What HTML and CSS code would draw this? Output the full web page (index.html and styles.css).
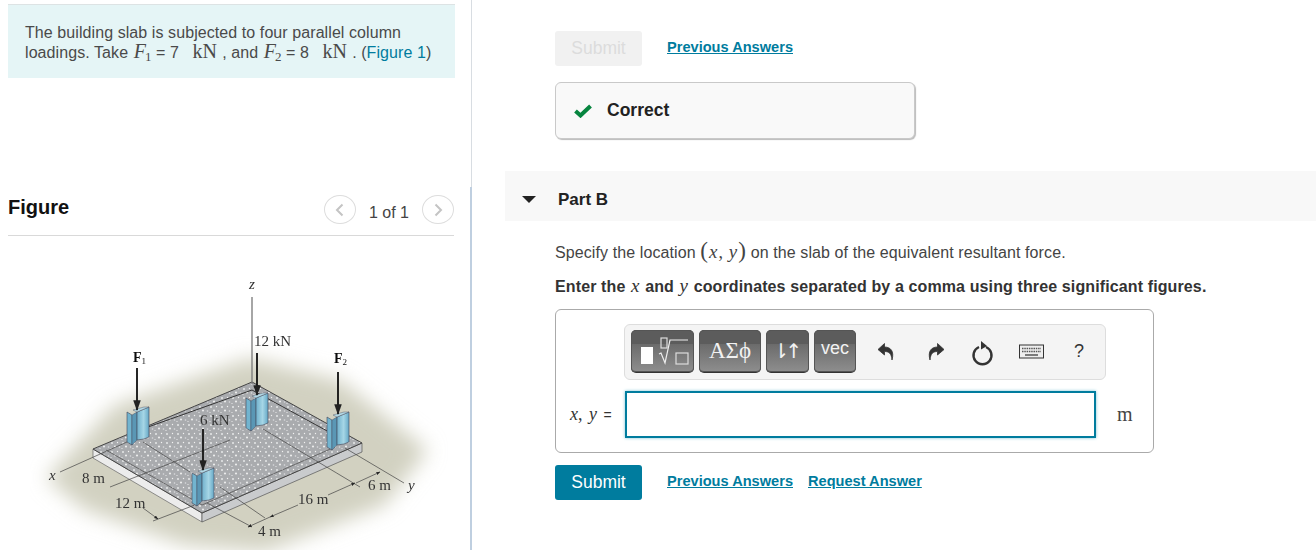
FILE: index.html
```html
<!DOCTYPE html>
<html lang="en">
<head>
<meta charset="utf-8">
<title>Part B</title>
<link rel="stylesheet" href="styles.css">
</head>
<body>
<div class="page">
  <aside class="left">
    <div class="intro">
      <p>The building slab is subjected to four parallel column<br>loadings. Take <span class="m"><i>F</i><sub>1</sub></span> = 7 <span class="m unit">kN</span>, and <span class="m"><i>F</i><sub>2</sub></span> = 8 <span class="m unit">kN</span>. (<a class="fig-link" href="#">Figure 1</a>)</p>
    </div>
    <div class="fig-head">
      <h2>Figure</h2>
      <div class="pager">
        <span class="circle"><svg width="12" height="14" viewBox="0 0 12 14"><path d="M8.500 1.500 3 7l5.500 5.500" fill="none" stroke="#c4c4c4" stroke-width="2"/></svg></span>
        <span class="count">1 of 1</span>
        <span class="circle"><svg width="12" height="14" viewBox="0 0 12 14"><path d="M3.500 1.500 9 7l-5.500 5.500" fill="none" stroke="#c4c4c4" stroke-width="2"/></svg></span>
      </div>
    </div>
    <svg class="figure" width="420" height="280" viewBox="30 270 420 280">
      <defs>
        <filter id="blur" x="-20%" y="-20%" width="140%" height="140%"><feGaussianBlur stdDeviation="10"/></filter>
        <filter id="soft"><feGaussianBlur stdDeviation="0.4"/></filter>
        <pattern id="dots" width="11" height="9" patternUnits="userSpaceOnUse">
          <rect width="11" height="9" fill="#a9abae"/>
          <circle cx="2" cy="2" r="1" fill="#e6e7e8"/>
          <circle cx="7.500" cy="1.500" r="0.700" fill="#f2f2f2"/>
          <circle cx="5" cy="5.500" r="1.100" fill="#ececec"/>
          <circle cx="9.500" cy="6" r="0.800" fill="#dcdde0"/>
          <circle cx="1" cy="7.500" r="0.600" fill="#f2f2f2"/>
        </pattern>
        <linearGradient id="steel" x1="0" x2="1" y1="0" y2="0">
          <stop offset="0" stop-color="#6fb0cc"/><stop offset=".55" stop-color="#a6d6e6"/><stop offset="1" stop-color="#65a8c6"/>
        </linearGradient>
        <g id="col">
          <path d="M0 5 5 8 5 38 0 35Z" fill="#72b4cf" stroke="#445" stroke-width=".6"/>
          <path d="M5 8 10 5 10 33 5 38Z" fill="#5a97b5" stroke="#445" stroke-width=".4"/>
          <path d="M10 5 22 0 22 30 17 32 10 33Z" fill="url(#steel)" stroke="#445" stroke-width=".6"/>
          <path d="M10 5 6 3 17 0 22 0Z" fill="#b5dbe8" stroke="#445" stroke-width=".4"/>
        </g>
        <marker id="ah" viewBox="0 0 10 10" refX="9" refY="5" markerWidth="6" markerHeight="6" orient="auto-start-reverse"><path d="M0 1.500 10 5 0 8.500Z" fill="#222"/></marker>
      </defs>
      <path d="M46 478 115 405 250 358 340 380 428 450 385 505 265 552 185 545 85 510Z" fill="#d2d1c1" filter="url(#blur)"/>
      <g filter="url(#soft)">
        <path d="M93 449 202 513 202 522 93 458Z" fill="#ececec" stroke="#666" stroke-width=".7"/>
        <path d="M202 513 362 443 362 452 202 522Z" fill="#c9cbcd" stroke="#555" stroke-width=".7"/>
        <path d="M93 449 252 382 362 443 202 513Z" fill="url(#dots)" stroke="#444" stroke-width="1"/>
        <path d="M148 427 252 390 340 438" fill="none" stroke="#333" stroke-width="1"/>
        <path d="M106 450 202 505 335 447" fill="none" stroke="#555" stroke-width=".8"/>
        <path d="M252 297V384" stroke="#777" stroke-width="1.300"/>
        <g fill="none" stroke="#444" stroke-width=".7">
          <path d="M60 472 127 442"/>
          <path d="M143 442 190 472"/>
          <path d="M230 440 110 487"/>
          <path d="M207 503 252 527"/>
          <path d="M153 521 200 503"/>
          <path d="M263 429 360 487"/>
          <path d="M345 448 404 483"/>
          <path d="M220 487 265 518"/>
        </g>
        <g fill="none" stroke="#444" stroke-width=".7" marker-end="url(#ah)">
          <path d="M143 508 158 519"/>
          <path d="M270 517 248 527"/>
          <path d="M298 505 270 517"/>
          <path d="M328 495 355 483"/>
          <path d="M356 483 380 472"/>
        </g>
        <use href="#col" x="127" y="407"/>
        <use href="#col" x="192" y="468"/>
        <use href="#col" x="246" y="393"/>
        <use href="#col" x="327" y="412"/>
        <g stroke="#111" stroke-width="1.800" marker-end="url(#ah)">
          <path d="M137 368V410"/>
          <path d="M203 429V470"/>
          <path d="M257 353V395"/>
          <path d="M338 372V414"/>
        </g>
        <g class="fig-text">
          <text x="133" y="362" class="b">F<tspan class="sub" dy="2">1</tspan></text>
          <text x="334" y="363" class="b">F<tspan class="sub" dy="2">2</tspan></text>
          <text x="254" y="346">12 kN</text>
          <text x="200" y="425">6 kN</text>
          <text x="82" y="483">8 m</text>
          <text x="115" y="508">12 m</text>
          <text x="298" y="504">16 m</text>
          <text x="258" y="536">4 m</text>
          <text x="368" y="490">6 m</text>
          <text x="249" y="289" class="it">z</text>
          <text x="49" y="480" class="it">x</text>
          <text x="408" y="490" class="it">y</text>
        </g>
      </g>
    </svg>
  </aside>
  <main class="right">
    <div class="actions actions-top">
      <button class="submit off" type="button">Submit</button>
      <a class="link" href="#">Previous Answers</a>
    </div>
    <div class="correct">
      <svg width="18" height="14" viewBox="0 0 18 14"><path d="M1.500 7 6.500 11.500 16.500 2" fill="none" stroke="#07853f" stroke-width="4"/></svg>
      <span>Correct</span>
    </div>
    <div class="part-head">
      <svg width="14" height="7" viewBox="0 0 14 7"><path d="M0 0H14L7 7Z" fill="#222"/></svg>
      <h3>Part B</h3>
    </div>
    <div class="body">
      <p class="q">Specify the location <span class="m mq"><span class="paren">(</span><i>x</i>, <i>y</i><span class="paren">)</span></span> on the slab of the equivalent resultant force.</p>
      <p class="q strong">Enter the <span class="m thin"><i>x</i></span> and <span class="m thin"><i>y</i></span> coordinates separated by a comma using three significant figures.</p>
      <div class="answer">
        <div class="toolbar">
          <button class="tool t1" type="button" aria-label="Templates">
            <svg width="63" height="42" viewBox="0 0 63 42"><rect x="10" y="17" width="12" height="17" fill="#fff"/><rect x="30" y="8" width="6" height="10" fill="none" stroke="#ddd" stroke-width="1.200"/><path d="M28 24l2-1 4 10 5-23h18" fill="none" stroke="#eee" stroke-width="1.200"/><rect x="45" y="23" width="12" height="11" fill="none" stroke="#ddd" stroke-width="1.200"/></svg>
          </button>
          <button class="tool t2" type="button">ΑΣϕ</button>
          <button class="tool t3" type="button">⇂↑</button>
          <button class="tool t4" type="button">vec</button>
          <div class="tools-right">
            <svg class="i-undo" width="18" height="20" viewBox="0 0 18 20"><path d="M7.500 1.500 1 7.500 7.500 13V9.500c4.500 0 7 2 7.500 8.500 2.500-9-1.500-13-7.500-13Z" fill="#333" stroke="#333" stroke-width=".8"/></svg>
            <svg class="i-redo" width="18" height="20" viewBox="0 0 18 20"><path d="M10.500 1.500 17 7.500 10.500 13V9.500c-4.500 0-7 2-7.500 8.500C.5 9 4.500 5 10.500 5Z" fill="#333" stroke="#333" stroke-width=".8"/></svg>
            <svg class="i-reset" width="24" height="26" viewBox="0 0 24 26"><path d="M8 7a9 9 0 1 0 7 0" fill="none" stroke="#333" stroke-width="2.400"/><path d="M10 1l6 5-6 3.500Z" fill="#333"/></svg>
            <svg class="i-keys" width="26" height="16" viewBox="0 0 26 16"><rect x=".5" y="1" width="24" height="13" fill="#eee" stroke="#333"/><path d="M3 4.500h19M3 7.500h19" stroke="#555" stroke-width="1.500" stroke-dasharray="1.500 .8"/><path d="M6 11h13" stroke="#555" stroke-width="1.500"/></svg>
            <span class="help">?</span>
          </div>
        </div>
        <div class="answer-row">
          <label class="var" for="ans"><i>x</i>, <i>y</i> <span>=</span></label>
          <input id="ans" class="entry" type="text">
          <span class="m-unit">m</span>
        </div>
      </div>
      <div class="actions actions-bottom">
        <button class="submit" type="button">Submit</button>
        <a class="link" href="#">Previous Answers</a>
        <a class="link" href="#">Request Answer</a>
      </div>
    </div>
  </main>
</div>
</body>
</html>
```

FILE: styles.css
```css
* { box-sizing: border-box; }
html, body { margin: 0; height: 550px; overflow: hidden; background: #fff; }
body { font-family: "Liberation Sans", Arial, sans-serif; font-size: 16px; color: #3d3d3d; }
p, h2, h3 { margin: 0; }
.page { display: flex; height: 550px; }

.left { width: 472px; height: 550px; padding: 4px 16px 0 8px; flex: none;
  background: linear-gradient(#d8dde2, #d8dde2) right 0 top 0 / 1px 187px no-repeat,
              linear-gradient(#bfcfe0, #bfcfe0) right 0 top 187px / 2px 363px no-repeat; }
.intro { height: 74px; width: 447px; background: #e5f5f6; border-top: 1px solid #dde3e4; padding: 18px 17px 0; line-height: 20px; color: #4a4a4a; letter-spacing: .08px; }
.intro p { white-space: nowrap; }
.m { font-family: "Liberation Serif", serif; font-size: 20px; line-height: 0; }
.m sub { font-size: 13px; line-height: 0; vertical-align: -3px; margin-left: -2px; }
.intro .m i { margin-right: 1px; margin-left: 1px; }
.unit { margin: 0 5px 0 9px; }
.fig-link { color: #007c9e; text-decoration: none; }

.fig-head { height: 64px; width: 446px; margin-top: 94px; border-bottom: 1px solid #d9d9d9; display: flex; justify-content: space-between; align-items: flex-start; padding-top: 23px; }
.fig-head h2 { font-size: 20px; line-height: 24px; color: #111; }
.pager { display: flex; align-items: center; gap: 13px; color: #444; }
.circle { width: 32px; height: 29px; border: 1px solid #ddd; border-radius: 50%; display: flex; align-items: center; justify-content: center; }
.count { line-height: 29px; position: relative; top: 3px; }
.figure { display: block; margin: 34px 0 0 22px; }
.fig-text text { font-family: "Liberation Serif", serif; font-size: 15px; fill: #333; }
.fig-text .b { font-weight: bold; fill: #111; font-size: 14px; }
.fig-text .sub { font-size: 9px; font-weight: normal; }
.fig-text .it { font-style: italic; }

.right { flex: 1; min-width: 0; padding: 31px 0 0 33px; }
.actions { display: flex; align-items: center; margin-left: 50px; }
.submit { width: 87px; height: 35px; border: 0; border-radius: 3px; background: #007c9e; color: #fff; font: 17.500px/35px "Liberation Sans", Arial, sans-serif; padding: 0; }
.submit.off { background: #f1f1f1; color: #dcdcdc; }
.link { color: #007c9e; font-weight: bold; font-size: 14.600px; margin-left: 25px; line-height: 16px; position: relative; top: -2px; }
.link + .link { margin-left: 15px; }
.correct { margin: 16px 0 0 50px; width: 360px; height: 57px; display: flex; align-items: center; gap: 15px; padding-left: 18px; background: #f9f9f9; border: 1px solid #c9c9c9; border-radius: 6px; box-shadow: 1px 1px 1px #bbb; font-weight: bold; color: #222; }
.correct span { font-size: 17.500px; }
.part-head { margin-top: 32px; height: 50px; background: #f8f8f8; display: flex; align-items: flex-start; padding: 25px 0 0 17px; gap: 22px; }
.part-head h3 { font-size: 17px; line-height: 16px; color: #222; margin-top: -4px; }
.part-head svg { flex: none; }
.body { margin-left: 50px; padding-top: 20px; }
.q { line-height: 24px; letter-spacing: .1px; color: #444; }
.mq { font-size: 18px; }
.mq i { font-size: 19px; margin: 0 1px; }
.q .paren { font-size: 23px; line-height: 0; }
.strong { margin-top: 10px; font-weight: bold; color: #333; letter-spacing: .12px; }
.thin { font-weight: normal; font-size: 19px; }
.thin i { margin: 0 1px; }
.answer { margin-top: 10px; width: 599px; height: 144px; border: 1px solid #aaa; border-radius: 6px; padding: 14px 0 0 68px; }
.toolbar { width: 482px; height: 56px; background: #f4f4f4; border: 1px solid #ddd; border-radius: 6px; display: flex; align-items: flex-start; gap: 5px; padding: 5px 0 0 6px; }
.tool { height: 43px; border: 0; border-radius: 5px; padding: 0; color: #f2f2f2; border-bottom: 1px solid #333; box-shadow: inset 0 0 0 1px #555;
  background: linear-gradient(#5c5c5c 0, #5c5c5c 33%, #6b6b6b 33%, #8e8e8e 100%); display: flex; align-items: center; justify-content: center; }
.t1 { width: 63px; }
.t2 { width: 62px; font: 23px "Liberation Serif", serif; }
.t3 { width: 43px; font: 20px "DejaVu Sans", sans-serif; letter-spacing: -4px; padding-right: 4px; }
.t4 { width: 42px; font: 18px "Liberation Sans", Arial, sans-serif; align-items: flex-start; padding-top: 8px; }
.tools-right { display: flex; align-items: center; height: 43px; margin-left: 16px; }
.i-undo { margin-left: 0; }
.i-redo { margin-left: 32px; }
.i-reset { margin-left: 26px; margin-top: 2px; }
.i-keys { margin-left: 24px; }
.help { font-size: 18px; color: #333; margin-left: 29px; }
.answer-row { display: flex; align-items: center; margin-top: 11px; height: 47px; }
.var { width: 57px; margin-left: -54px; font: 18px "Liberation Serif", serif; color: #333; flex: none; word-spacing: 2px; white-space: nowrap; }
.var span { font-family: "Liberation Sans", sans-serif; font-size: 14px; }
.entry { width: 471px; height: 47px; border: 2px solid #007c9e; box-shadow: 0 0 3px #7cc2d4; background: #fff; outline: 0; margin-left: -2px; flex: none; }
.m-unit { font: 20px "Liberation Serif", serif; margin-left: 21px; color: #444; }
.actions-bottom { margin-left: 0; margin-top: 12px; }
```
